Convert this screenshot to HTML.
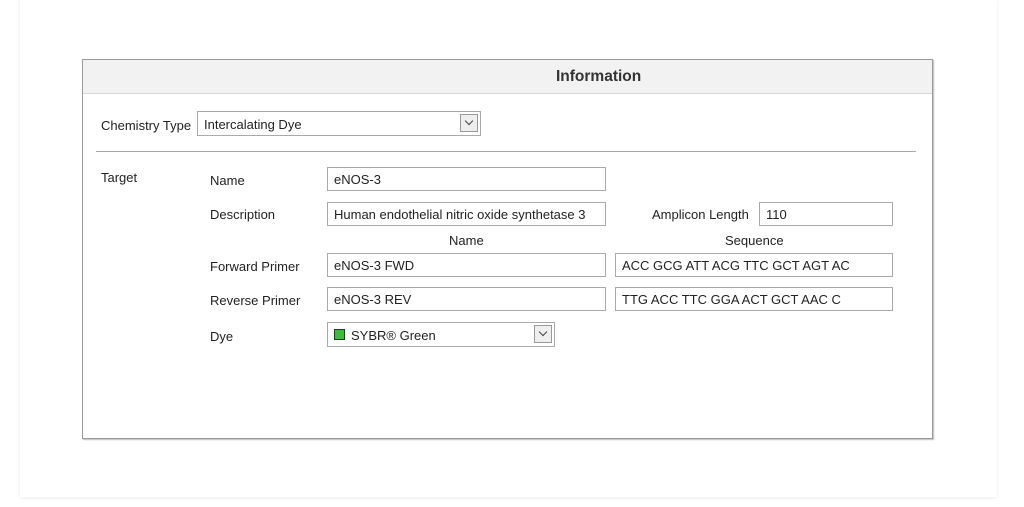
<!DOCTYPE html>
<html><head><style>
body{margin:0;width:1024px;height:507px;background:#fff;position:relative;overflow:hidden;font-family:"Liberation Sans",sans-serif;font-size:13px;color:#222}
.card{position:absolute;left:20px;top:-2px;width:977px;height:499px;background:#fff;box-shadow:0 1px 4px rgba(0,0,0,0.08)}
.box{position:absolute;left:82px;top:59px;width:849px;height:378px;border:1px solid #9a9a9a;background:#fff;box-shadow:1px 1px 1px #bbb}
.hdr{position:absolute;left:0;top:0;width:849px;height:33px;background:#f2f2f2;border-bottom:1px solid #d6d6d6}
.hdr span{position:absolute;left:473px;top:8px;font-weight:bold;font-size:15.5px;color:#333}
.t{position:absolute;white-space:nowrap}
.in{position:absolute;height:22px;border:1px solid #aaa;box-sizing:border-box;background:#fff;padding:3px 0 0 6px;white-space:nowrap;color:#222}
.dd{position:absolute;top:2px;right:2px;width:18px;height:18px;border:1px solid #999;box-sizing:border-box;background:#eee}
.dd:after{content:"";position:absolute;left:5px;top:3px;width:5px;height:5px;border-right:1.5px solid #444;border-bottom:1.5px solid #444;transform:rotate(45deg)}
</style></head><body>
<div class="card"></div>
<div class="box"><div class="hdr"><span>Information</span></div></div>
<div class="t" style="left:101px;top:118px">Chemistry Type</div>
<div class="in" style="left:197px;top:111px;width:284px;height:25px;padding-top:5px">Intercalating Dye<div class="dd" style="top:2px;right:2px"></div></div>
<div style="position:absolute;left:96px;top:151px;width:820px;height:1px;background:#aaa"></div>
<div class="t" style="left:101px;top:170px">Target</div>
<div class="t" style="left:210px;top:173px">Name</div>
<div class="in" style="left:327px;top:167px;width:279px;height:24px;padding-top:4px">eNOS-3</div>
<div class="t" style="left:210px;top:207px">Description</div>
<div class="in" style="left:327px;top:202px;width:279px;height:24px;padding-top:4px">Human endothelial nitric oxide synthetase 3</div>
<div class="t" style="left:652px;top:207px">Amplicon Length</div>
<div class="in" style="left:759px;top:202px;width:134px;height:24px;padding-top:4px">110</div>
<div class="t" style="left:449px;top:233px">Name</div>
<div class="t" style="left:725px;top:233px">Sequence</div>
<div class="t" style="left:210px;top:259px">Forward Primer</div>
<div class="in" style="left:327px;top:253px;width:279px;height:24px;padding-top:4px">eNOS-3 FWD</div>
<div class="in" style="left:615px;top:253px;width:278px;height:24px;padding-top:4px">ACC GCG ATT ACG TTC GCT AGT AC</div>
<div class="t" style="left:210px;top:293px">Reverse Primer</div>
<div class="in" style="left:327px;top:287px;width:279px;height:24px;padding-top:4px">eNOS-3 REV</div>
<div class="in" style="left:615px;top:287px;width:278px;height:24px;padding-top:4px">TTG ACC TTC GGA ACT GCT AAC C</div>
<div class="t" style="left:210px;top:329px">Dye</div>
<div class="in" style="left:327px;top:322px;width:228px;height:25px;padding:5px 0 0 23px">SYBR® Green<div style="position:absolute;left:6px;top:6px;width:9px;height:9px;background:#33c233;border:1px solid #333"></div><div class="dd" style="top:2px;right:2px"></div></div>
</body></html>
